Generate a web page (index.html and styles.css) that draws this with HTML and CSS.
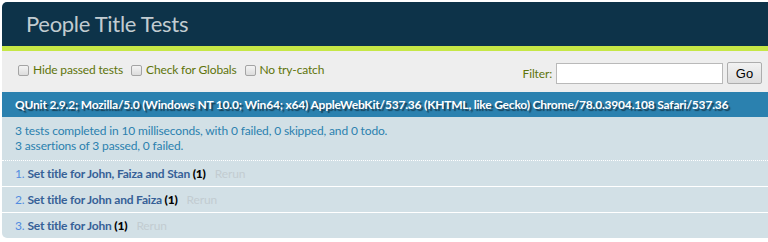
FILE: index.html
```html
<!DOCTYPE html>
<html lang="en">
<head>
    <meta charset="UTF-8">
    <title>People Title Tests</title>
    <link rel="stylesheet" href="styles.css">
</head>
<body>

<div class="qunit">
    <h1 class="qunit-header"><a href="#">People Title Tests</a></h1>
    <div class="qunit-banner"></div>
    <div class="toolbar">
        <div class="options">
            <label class="opt"><input type="checkbox"> Hide passed tests</label>
            <label class="opt"><input type="checkbox"> Check for Globals</label>
            <label class="opt"><input type="checkbox"> No try-catch</label>
        </div>
        <form class="filter">
            <label>Filter: <input type="text" class="filter-input"></label>
            <button type="button">Go</button>
        </form>
    </div>
    <div class="user-agent">QUnit 2.9.2; Mozilla/5.0 (Windows NT 10.0; Win64; x64) AppleWebKit/537.36 (KHTML, like Gecko) Chrome/78.0.3904.108 Safari/537.36</div>
    <div class="testresult">
        3 tests completed in 10 milliseconds, with 0 failed, 0 skipped, and 0 todo.<br>
        3 assertions of 3 passed, 0 failed.
    </div>
    <ol class="tests">
        <li class="pass"><strong><span class="test-name">Set title for John, Faiza and Stan</span> <b class="counts">(1)</b></strong><a href="#">Rerun</a></li>
        <li class="pass"><strong><span class="test-name">Set title for John and Faiza</span> <b class="counts">(1)</b></strong><a href="#">Rerun</a></li>
        <li class="pass"><strong><span class="test-name">Set title for John</span> <b class="counts">(1)</b></strong><a href="#">Rerun</a></li>
    </ol>
</div>

</body>
</html>
```

FILE: styles.css
```css
html, body {
    margin: 0;
    overflow: hidden;
    background: #fff;
}
.qunit {
    margin: 2px 0 0 2px;
    font-family: Lato, "Open Sans", sans-serif;
    font-size: 12px;
    letter-spacing: -0.15px;
}
.qunit-header {
    margin: 0;
    padding: 0 0 0 24px;
    height: 44px;
    line-height: 44px;
    font-size: 22px;
    font-weight: 400;
    letter-spacing: -0.3px;
    background-color: #0d3349;
    border-radius: 5px 0 0 0;
}
.qunit-header a {
    color: #c2ccd1;
    text-decoration: none;
}
.qunit-banner {
    height: 5px;
    background-color: #c6e746;
}
.toolbar {
    display: flex;
    justify-content: space-between;
    align-items: flex-start;
    box-sizing: border-box;
    height: 41px;
    padding: 11px 6px 0 13px;
    color: #5e740b;
    background-color: #eee;
}
.options {
    display: flex;
    gap: 5px;
    padding-top: 1px;
}
.opt {
    display: flex;
    align-items: center;
    line-height: 14px;
    gap: 4px;
}
.opt input {
    appearance: none;
    -webkit-appearance: none;
    width: 11px;
    height: 11px;
    margin: 0 0 0 3px;
    border: 1px solid #a4a4a4;
    border-radius: 2px;
    background: linear-gradient(#f4f4f4, #dcdcdc);
}
.filter {
    display: flex;
    align-items: center;
    gap: 4px;
    margin: 0;
}
.filter label {
    display: flex;
    align-items: center;
    gap: 4px;
}
.filter-input {
    box-sizing: border-box;
    width: 167px;
    height: 21px;
    margin: 0;
    border: 1px solid #b9b9b9;
    background: #fff;
}
.filter button {
    box-sizing: border-box;
    width: 35px;
    height: 22px;
    margin: 0;
    padding: 0;
    font-family: "Liberation Sans", Arial, sans-serif;
    font-size: 13px;
    letter-spacing: 0;
    color: #000;
    border: 1px solid #adadad;
    border-radius: 2px;
    background: linear-gradient(#f2f2f2, #dddddd);
}
.user-agent {
    height: 25px;
    line-height: 25px;
    padding: 0 13px;
    font-weight: 700;
    letter-spacing: -0.2px;
    color: #fff;
    white-space: nowrap;
    background-color: #2b81af;
    text-shadow: rgba(0, 0, 0, 0.5) 2px 2px 1px;
}
.testresult {
    padding: 6px 13px 7px;
    line-height: 15px;
    color: #2b81af;
    background-color: #d2e0e6;
    border-bottom: 1px dotted #fff;
}
.tests {
    margin: 0;
    padding: 0;
    list-style-position: inside;
}
.tests li {
    padding: 5px 13px;
    line-height: 15px;
    border-bottom: 1px solid #fff;
}
.tests li:last-child {
    border-bottom: 0;
    border-radius: 0 0 0 5px;
}
.tests .pass {
    color: #528ce0;
    background-color: #d2e0e6;
}
.tests strong {
    letter-spacing: -0.2px;
}
.tests .test-name {
    color: #366097;
}
.tests .counts {
    color: #000;
}
.tests a {
    padding: 0 0 0 9px;
    color: #c2ccd1;
    text-decoration: none;
    font-weight: 400;
}
```
